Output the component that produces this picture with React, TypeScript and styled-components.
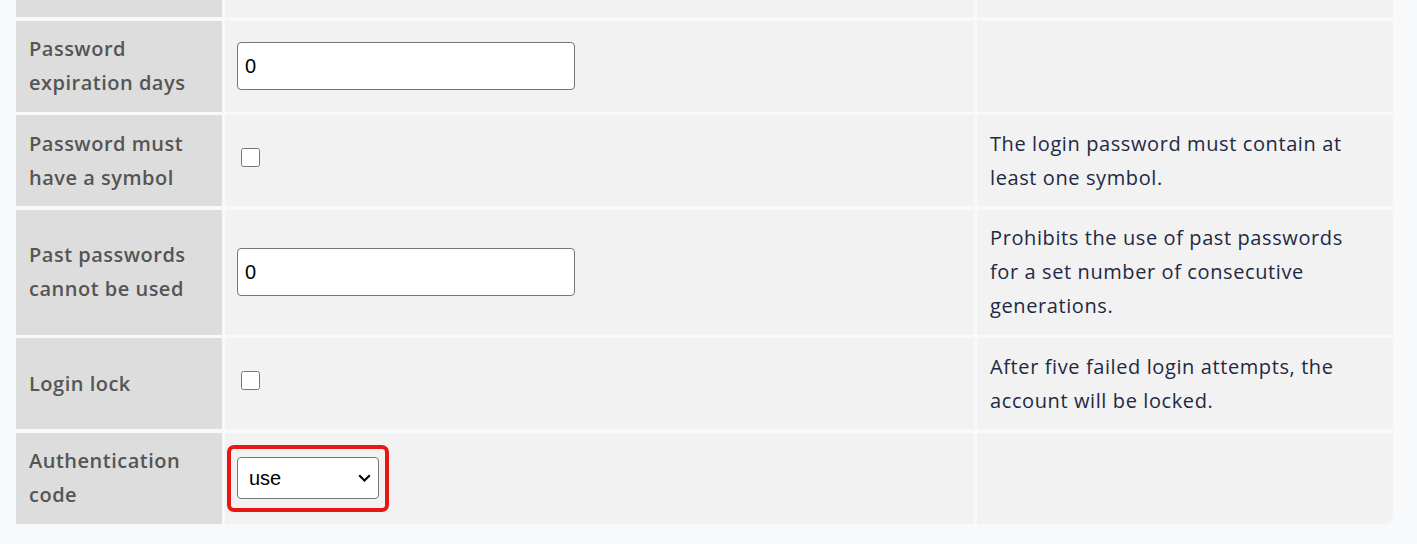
import React from "react";
import styled, { createGlobalStyle } from "styled-components";

type Row = {
  label: string;
  kind: "text" | "check" | "select" | "none";
  value?: string;
  description?: string;
  highlight?: boolean;
};

const rows: Row[] = [
  { label: "Password expiration days", kind: "text", value: "0" },
  {
    label: "Password must have a symbol",
    kind: "check",
    description: "The login password must contain at least one symbol.",
  },
  {
    label: "Past passwords cannot be used",
    kind: "text",
    value: "0",
    description:
      "Prohibits the use of past passwords for a set number of consecutive generations.",
  },
  {
    label: "Login lock",
    kind: "check",
    description: "After five failed login attempts, the account will be locked.",
  },
  { label: "Authentication code", kind: "select", value: "use", highlight: true },
];

const GlobalStyle = createGlobalStyle`
  html, body {
    margin: 0;
    padding: 0;
    background: #f8f9fb;
    overflow: hidden;
  }
  body {
    font-family: "Open Sans", "Noto Sans", sans-serif;
  }
`;

const Page = styled.div`
  padding: 0 24px 0 16px;
`;

const Grid = styled.div`
  display: grid;
  grid-template-columns: 206px 749px 1fr;
  column-gap: 3px;
  row-gap: 3.5px;
`;

const LabelCell = styled.div<{ $stub?: boolean }>`
  background: #dddddd;
  padding: ${(p) => (p.$stub ? "0" : "11.5px 13px")};
  height: ${(p) => (p.$stub ? "17px" : "auto")};
  display: flex;
  align-items: center;
  font-size: 20px;
  font-weight: 600;
  letter-spacing: 0.5px;
  line-height: 34px;
  color: #555555;
`;

const ValueCell = styled.div<{ $stub?: boolean }>`
  background: #f2f2f2;
  padding: ${(p) => (p.$stub ? "0" : "11.5px 12px")};
  display: flex;
  align-items: center;
`;

const DescCell = styled.div<{ $last?: boolean; $stub?: boolean }>`
  background: #f2f2f2;
  padding: ${(p) => (p.$stub ? "0" : "11.5px 24px 11.5px 13px")};
  display: flex;
  align-items: center;
  font-size: 20px;
  letter-spacing: 0.6px;
  line-height: 34px;
  color: #1e2944;
  border-bottom-right-radius: ${(p) => (p.$last ? "8px" : "0")};
`;

const TextInput = styled.input`
  box-sizing: border-box;
  width: 338px;
  height: 48px;
  padding: 0 7px;
  border: 1px solid #767676;
  border-radius: 4px;
  background: #ffffff;
  font-family: "Liberation Sans", Arial, sans-serif;
  font-size: 20px;
  color: #000000;
`;

const CheckBox = styled.input`
  width: 19px;
  height: 19px;
  margin: 0 0 6px 4px;
`;

const SelectWrap = styled.span`
  position: relative;
  display: inline-block;
`;

const Highlight = styled.span`
  position: absolute;
  inset: -12px -10px -13px -10px;
  border: 4px solid #e8170f;
  border-radius: 7px;
  pointer-events: none;
`;

const Chevron = styled.svg`
  position: absolute;
  right: 8px;
  top: 17px;
  width: 13px;
  height: 8px;
  pointer-events: none;
`;

const Select = styled.select`
  box-sizing: border-box;
  display: block;
  width: 142px;
  height: 42px;
  padding: 0 11px;
  border: 1px solid #767676;
  border-radius: 4px;
  background: #ffffff;
  appearance: none;
  font-family: "Liberation Sans", Arial, sans-serif;
  font-size: 20px;
  color: #000000;
`;

const renderValue = (row: Row) => {
  switch (row.kind) {
    case "text":
      return <TextInput type="text" defaultValue={row.value} />;
    case "check":
      return <CheckBox type="checkbox" />;
    case "select":
      return (
        <SelectWrap>
          <Select defaultValue={row.value}>
            <option value="use">use</option>
            <option value="not">not use</option>
          </Select>
          <Chevron viewBox="0 0 13 8">
            <path d="M1.2 1.2 L6.5 6.5 L11.8 1.2" fill="none" stroke="#000" strokeWidth="2" />
          </Chevron>
          {row.highlight && <Highlight />}
        </SelectWrap>
      );
    default:
      return null;
  }
};

const App = () => {
  return (
    <Page>
      <GlobalStyle />
      <Grid>
        <LabelCell $stub />
        <ValueCell $stub />
        <DescCell $stub />
        {rows.map((row, i) => (
          <React.Fragment key={row.label}>
            <LabelCell>{row.label}</LabelCell>
            <ValueCell>{renderValue(row)}</ValueCell>
            <DescCell $last={i === rows.length - 1}>{row.description}</DescCell>
          </React.Fragment>
        ))}
      </Grid>
    </Page>
  );
};

export default App;
